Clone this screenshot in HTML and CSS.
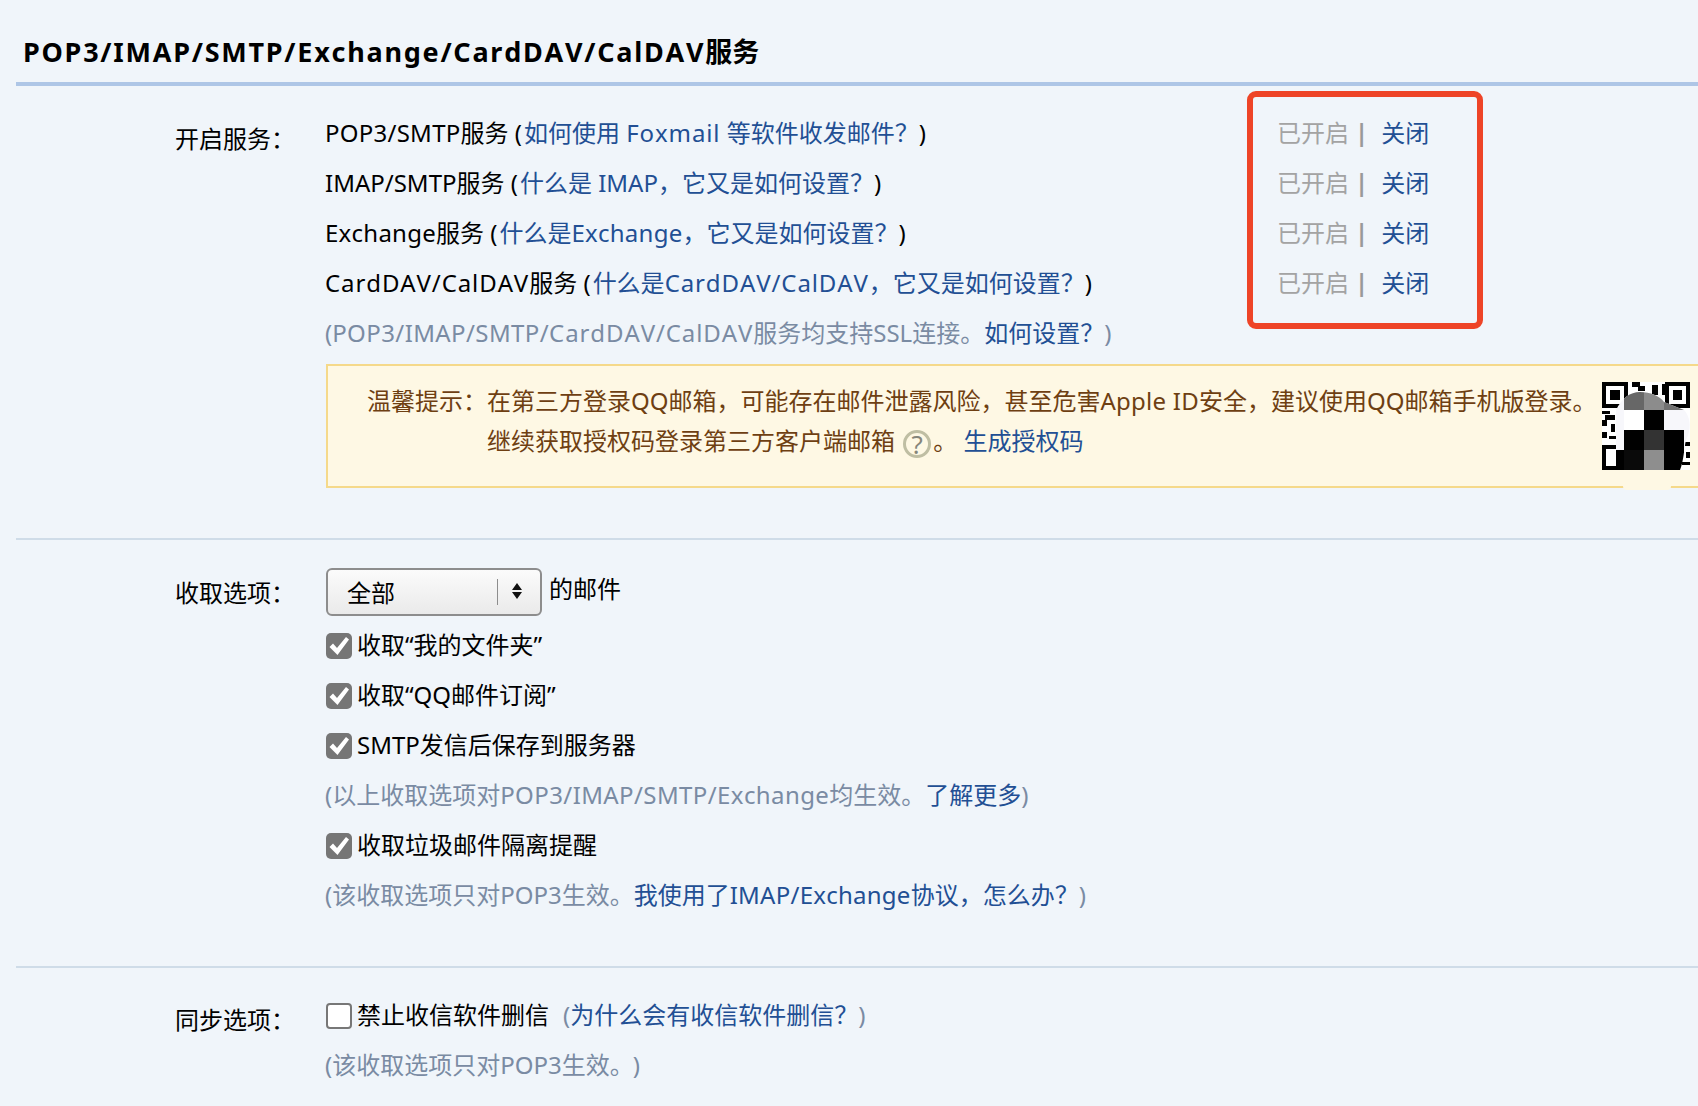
FILE: index.html
```html
<!DOCTYPE html>
<html lang="zh-CN">
<head>
  <meta charset="UTF-8" />
  <title>POP3/IMAP/SMTP/Exchange/CardDAV/CalDAV服务</title>
  <link rel="stylesheet" href="styles.css">
</head>
<body>

  <h2 class="page-title"><span class="en">POP3/IMAP/SMTP/Exchange/CardDAV/CalDAV</span>服务</h2>

  <!-- 开启服务 -->
  <div class="section section-service">
    <div class="section-label">开启服务：</div>
    <div class="section-body">
      <div class="row">
        <div class="row-main"><span class="en">POP3/SMTP</span>服务 (<a href="#">如何使用 <span class="en-wide">Foxmail</span> 等软件收发邮件？</a>)</div>
        <div class="status"><span class="status-on">已开启</span><span class="status-sep">|</span><a href="#">关闭</a></div>
      </div>
      <div class="row">
        <div class="row-main">IMAP/SMTP服务 (<a href="#">什么是 IMAP，它又是如何设置？</a>)</div>
        <div class="status"><span class="status-on">已开启</span><span class="status-sep">|</span><a href="#">关闭</a></div>
      </div>
      <div class="row">
        <div class="row-main"><span class="en">Exchange</span>服务 (<a href="#">什么是<span class="en">Exchange</span>，它又是如何设置？</a>)</div>
        <div class="status"><span class="status-on">已开启</span><span class="status-sep">|</span><a href="#">关闭</a></div>
      </div>
      <div class="row">
        <div class="row-main"><span class="en-wide">CardDAV/CalDAV</span>服务 (<a href="#">什么是<span class="en-wide">CardDAV/CalDAV</span>，它又是如何设置？</a>)</div>
        <div class="status"><span class="status-on">已开启</span><span class="status-sep">|</span><a href="#">关闭</a></div>
      </div>
      <div class="row hint"><span>(<span class="en-mid">POP3/IMAP/SMTP/</span><span class="en-wide">CardDAV/CalDAV</span>服务均支持SSL连接。<a href="#">如何设置？</a>)</span></div>

      <div class="notice">
        <div class="notice-label">温馨提示：</div>
        <div class="notice-text">
          <div>在第三方登录QQ邮箱，可能存在邮件泄露风险，甚至危害<span class="en">Apple ID</span>安全，建议使用QQ邮箱手机版登录。</div>
          <div>继续获取授权码登录第三方客户端邮箱 <span class="help">?</span>。 <a href="#">生成授权码</a></div>
        </div>
        <svg class="qr" width="88" height="108" viewBox="0 0 88 108">
          <rect width="88" height="88" fill="#fff"/>
          <path fill="#000" d="M0 0h26v26H0zM63 0h25v26H63zM0 63h26v25H0zM30 0h8v5h-8zM36 4h7v5h-7zM50 3h6v10h-6zM60 2h3v11h-3zM0 29h8v3H0zM3 33h10v5H3zM0 38h5v6H0zM9 42h4v8H9zM0 50h5v6H0zM7 54h8v3H7zM82 60h6v4h-6zM84 70h4v6h-4zM80 80h8v3h-8z"/>
          <path fill="#fff" d="M4 4h18v18H4zM67 4h17v18H67zM4 67h18v17H4z"/>
          <path fill="#000" d="M8 8h10v10H8zM71 8h9v10h-9z"/>
          <path fill="#fef8e4" d="M21 88h48v16q0 4-4 4H25q-4 0-4-4z"/>
          <g clip-path="url(#blob)">
            <rect x="14" y="8" width="76" height="60" fill="#f7f7fb"/>
            <rect x="14" y="68" width="8" height="20" fill="#000"/>
            <rect x="22" y="8" width="20" height="20" fill="#676767"/>
            <rect x="42" y="8" width="20" height="20" fill="#8c8c8c"/>
            <rect x="62" y="8" width="20" height="20" fill="#717171"/>
            <rect x="22" y="28" width="20" height="20" fill="#fff"/>
            <rect x="42" y="28" width="20" height="20" fill="#000"/>
            <rect x="22" y="48" width="20" height="20" fill="#000"/>
            <rect x="42" y="48" width="20" height="20" fill="#333"/>
            <rect x="62" y="48" width="20" height="40" fill="#000"/>
            <rect x="22" y="68" width="20" height="20" fill="#0a0a0a"/>
            <rect x="42" y="68" width="20" height="20" fill="#8e8e8e"/>
          </g>
          <defs>
            <clipPath id="blob">
              <path d="M14 28C20 16 28 10 38 10C48 10 58 14 62 20L82 28C88 34 90 46 84 58C82 66 82 78 78 88H14z"/>
            </clipPath>
          </defs>
        </svg>
      </div>
    </div>
  </div>

  <!-- 收取选项 -->
  <div class="section section-fetch">
    <div class="section-label">收取选项：</div>
    <div class="section-body">
      <div class="select-row">
        <div class="select">
          <span class="select-text">全部</span>
          <span class="select-sep"></span>
          <svg class="select-arrows" width="10" height="16" viewBox="0 0 10 16">
            <path fill="#111" d="M5 0l5 7H0zM5 16l5-7H0z"/>
          </svg>
        </div>
        <span>的邮件</span>
      </div>
      <div class="row">
        <span class="check checked"><svg width="26" height="26" viewBox="0 0 26 26"><path fill="#fff" d="M3.500 14L7 10.500l4 4.500L20 4l3 2.500L11.500 22z"/></svg></span><span>收取“我的文件夹”</span>
      </div>
      <div class="row">
        <span class="check checked"><svg width="26" height="26" viewBox="0 0 26 26"><path fill="#fff" d="M3.500 14L7 10.500l4 4.500L20 4l3 2.500L11.500 22z"/></svg></span><span>收取“QQ邮件订阅”</span>
      </div>
      <div class="row">
        <span class="check checked"><svg width="26" height="26" viewBox="0 0 26 26"><path fill="#fff" d="M3.500 14L7 10.500l4 4.500L20 4l3 2.500L11.500 22z"/></svg></span><span>SMTP发信后保存到服务器</span>
      </div>
      <div class="row hint"><span>(以上收取选项对<span class="en-mid">POP3/IMAP/SMTP/Exchange</span>均生效。<a href="#">了解更多</a>)</span></div>
      <div class="row">
        <span class="check checked"><svg width="26" height="26" viewBox="0 0 26 26"><path fill="#fff" d="M3.500 14L7 10.500l4 4.500L20 4l3 2.500L11.500 22z"/></svg></span><span>收取垃圾邮件隔离提醒</span>
      </div>
      <div class="row hint"><span>(该收取选项只对POP3生效。<a href="#">我使用了<span class="en">IMAP/Exchange</span>协议，怎么办？</a>)</span></div>
    </div>
  </div>

  <!-- 同步选项 -->
  <div class="section section-sync">
    <div class="section-label">同步选项：</div>
    <div class="section-body">
      <div class="row">
        <span class="check"></span><span>禁止收信软件删信</span><span class="hint hint-inline">(<a href="#">为什么会有收信软件删信？</a>)</span>
      </div>
      <div class="row hint"><span>(该收取选项只对POP3生效。<span class="hint-end">)</span></span></div>
    </div>
  </div>

  <!-- 标注框 -->
  <div class="mark-box"></div>

</body>
</html>
```

FILE: styles.css
```css
/* 基础样式 */
body {
  margin: 0;
  padding: 0 0 0 16px;
  height: 1106px;
  box-sizing: border-box;
  overflow: hidden;
  position: relative;
  background-color: #f0f5fa;
  color: #000;
  font-family: "Noto Sans", "Noto Sans CJK SC", sans-serif;
  font-size: 24px;
  font-kerning: none;
}

a {
  color: #224f94;
  text-decoration: none;
}

/* 西文字距 */
.en {
  letter-spacing: 0.25px;
}

.en-mid {
  letter-spacing: 0.4px;
}

.en-wide {
  letter-spacing: 0.9px;
}

.page-title {
  margin: 0;
  padding: 32px 0 11px 7px;
  height: 39px;
  line-height: 39px;
  font-size: 27px;
  font-weight: 700;
  border-bottom: 4px solid #aec6e6;
}

.page-title .en {
  letter-spacing: 1.75px;
}

/* Sections */
.section {
  display: flex;
  border-bottom: 2px solid #cfdce8;
}

.section-service {
  height: 454px;
  padding-top: 20px;
  box-sizing: border-box;
}

.section-fetch {
  height: 428px;
  padding-top: 24px;
  box-sizing: border-box;
}

.section-sync {
  border-bottom: none;
  padding-top: 20px;
}

.section-label {
  width: 309px;
  padding: 8px 0 0 159px;
  box-sizing: border-box;
  line-height: 50px;
  flex-shrink: 0;
}

.section-fetch .section-label {
  padding-top: 4px;
}

.section-sync .section-label {
  padding-top: 7px;
}

.section-body {
  flex: 1;
  min-width: 0;
}

.row {
  display: flex;
  align-items: center;
  height: 50px;
}

.row-main {
  width: 952px;
}

.row-main a {
  margin-left: 2px;
}

.hint {
  color: #7a8ba3;
}

.hint-inline {
  margin-left: 14px;
}

.hint-end {
  margin-left: 11px;
}

/* 状态 */
.status {
  display: flex;
  align-items: center;
}

.status-on {
  color: #a3a3a3;
}

.status-sep {
  color: #999;
  margin: 0 13px 0 6px;
  font-weight: 700;
}

/* 温馨提示 */
.notice {
  position: relative;
  display: flex;
  margin: 8px 0 0 1px;
  height: 124px;
  padding: 15px 0 0 39px;
  box-sizing: border-box;
  border: 2px solid #f5d98a;
  border-right: none;
  background-color: #fef8e4;
  color: #6e3f12;
  line-height: 40px;
}

.notice-label {
  width: 120px;
  flex-shrink: 0;
}

.notice-text {
  white-space: nowrap;
}

.help {
  display: inline-block;
  width: 22px;
  height: 22px;
  line-height: 22px;
  margin: 0 2px;
  text-align: center;
  vertical-align: middle;
  border: 3px solid #bfbea3;
  border-radius: 50%;
  color: #85857a;
  font-size: 26px;
}

.qr {
  position: absolute;
  top: 16px;
  right: 8px;
}

/* 下拉框 */
.select-row {
  display: flex;
  align-items: flex-start;
  height: 54px;
  padding: 4px 0 0 1px;
  box-sizing: border-box;
  line-height: 42px;
}

.select {
  display: flex;
  align-items: center;
  width: 216px;
  height: 48px;
  margin-right: 7px;
  padding: 2px 0 0 19px;
  box-sizing: border-box;
  border: 2px solid #8d8d8d;
  border-radius: 6px;
  background: linear-gradient(#fbfbfb, #eaeaea);
}

.select-text {
  width: 150px;
}

.select-sep {
  width: 1px;
  height: 26px;
  margin-top: -2px;
  background-color: #8d8d8d;
}

.select-arrows {
  margin: -4px 0 0 14px;
}

/* 复选框 */
.check {
  flex-shrink: 0;
  width: 26px;
  height: 26px;
  margin: 6px 5px 0 1px;
  box-sizing: border-box;
  border: 2px solid #777;
  border-radius: 4px;
  background-color: #fff;
}

.check.checked {
  border: none;
  border-radius: 5px;
  background-color: #767676;
}

.check svg {
  display: block;
}

/* 红色标注框 */
.mark-box {
  position: absolute;
  left: 1247px;
  top: 91px;
  width: 236px;
  height: 238px;
  box-sizing: border-box;
  border: 6px solid #ee4427;
  border-radius: 9px;
}
```
